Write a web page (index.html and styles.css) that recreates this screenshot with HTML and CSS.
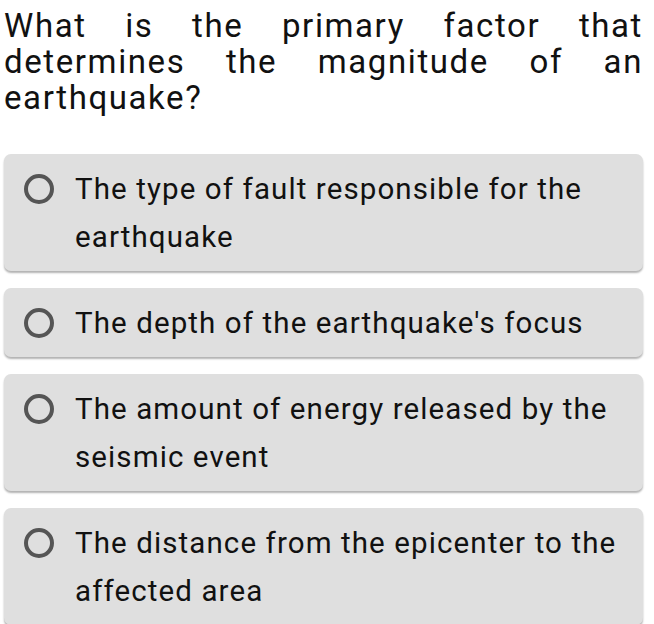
FILE: index.html
```html
<!DOCTYPE html>
<html lang="en">
<head>
<meta charset="utf-8">
<title>Quiz</title>
<link rel="stylesheet" href="styles.css">
</head>
<body>
<div class="quiz">
  <p class="question">What is the primary factor that determines the magnitude of an earthquake?</p>
  <ul class="options">
    <li class="option"><span class="radio-wrap"><span class="radio"></span></span><span class="label">The type of fault responsible for the earthquake</span></li>
    <li class="option"><span class="radio-wrap"><span class="radio"></span></span><span class="label">The depth of the earthquake's focus</span></li>
    <li class="option"><span class="radio-wrap"><span class="radio"></span></span><span class="label">The amount of energy released by the seismic event</span></li>
    <li class="option"><span class="radio-wrap"><span class="radio"></span></span><span class="label">The distance from the epicenter to the affected area</span></li>
  </ul>
</div>
</body>
</html>
```
FILE: styles.css
```css
html, body {
  margin: 0;
  padding: 0;
  background: #ffffff;
}
body {
  font-family: Roboto, "Noto Sans", sans-serif;
  color: #111111;
  overflow: hidden;
}
.quiz {
  width: 639px;
  padding: 8px 0 0 4px;
}
.question {
  margin: 0;
  font-size: 33px;
  line-height: 36px;
  letter-spacing: 1.6px;
  text-align: justify;
  color: #111111;
}
.options {
  list-style: none;
  margin: 38px 0 0 0;
  padding: 0;
  display: flex;
  flex-direction: column;
  gap: 17px;
}
.option {
  display: flex;
  align-items: flex-start;
  gap: 21px;
  background: #dfdfdf;
  border-radius: 7px;
  padding: 11px 10px 10px 20px;
  box-shadow: 0 2px 2px rgba(0, 0, 0, 0.3);
}
.radio-wrap {
  flex: none;
  height: 48px;
  display: flex;
  align-items: center;
}
.radio {
  display: block;
  width: 30px;
  height: 30px;
  box-sizing: border-box;
  border: 4px solid #555555;
  border-radius: 50%;
}
.label {
  font-size: 29.5px;
  line-height: 48px;
  letter-spacing: 1.1px;
  color: #111111;
}
```
